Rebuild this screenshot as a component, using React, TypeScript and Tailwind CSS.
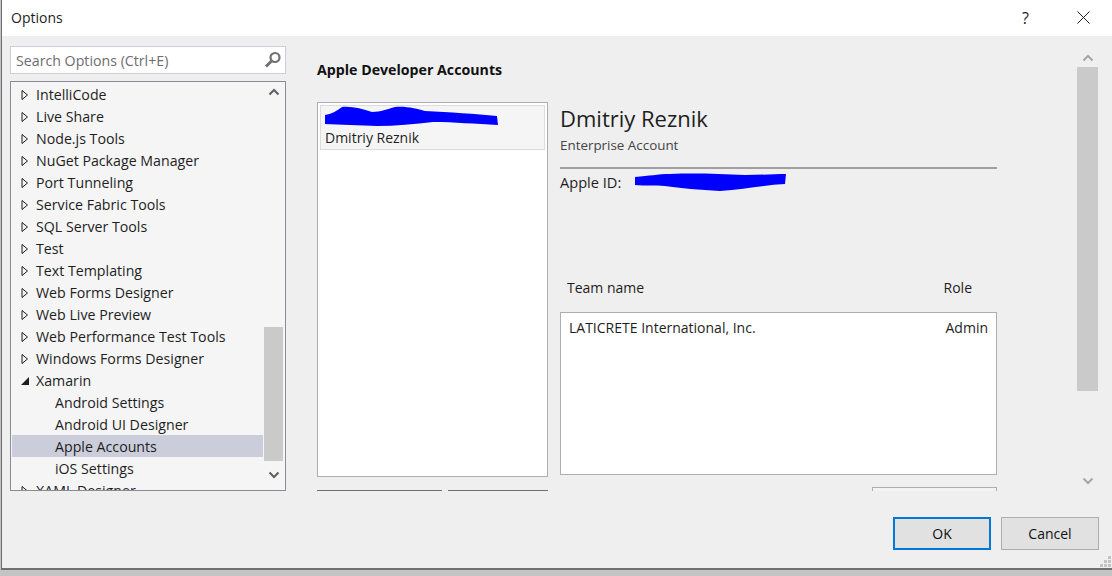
const font = { fontFamily: '"Open Sans", "Noto Sans", sans-serif' };

type TreeRow = { label: string; state?: "closed" | "open"; selected?: boolean };

const rows: TreeRow[] = [
  { label: "IntelliCode", state: "closed" },
  { label: "Live Share", state: "closed" },
  { label: "Node.js Tools", state: "closed" },
  { label: "NuGet Package Manager", state: "closed" },
  { label: "Port Tunneling", state: "closed" },
  { label: "Service Fabric Tools", state: "closed" },
  { label: "SQL Server Tools", state: "closed" },
  { label: "Test", state: "closed" },
  { label: "Text Templating", state: "closed" },
  { label: "Web Forms Designer", state: "closed" },
  { label: "Web Live Preview", state: "closed" },
  { label: "Web Performance Test Tools", state: "closed" },
  { label: "Windows Forms Designer", state: "closed" },
  { label: "Xamarin", state: "open" },
  { label: "Android Settings" },
  { label: "Android UI Designer" },
  { label: "Apple Accounts", selected: true },
  { label: "iOS Settings" },
  { label: "XAML Designer", state: "closed" },
];

function Chevron({ up, color }: { up?: boolean; color: string }) {
  return (
    <svg width="12" height="8" viewBox="0 0 12 8" className="block">
      <path d={up ? "M1.5 6.5 6 2l4.5 4.5" : "M1.5 1.5 6 6l4.5-4.5"} fill="none" stroke={color} strokeWidth="2" />
    </svg>
  );
}

function Row({ row }: { row: TreeRow }) {
  return (
    <div className={`flex h-[22px] shrink-0 items-center pt-[2px] ${row.selected ? "bg-[#cbcdda]" : ""}`}>
      <span className="flex w-[24px] shrink-0 justify-end pr-[7px]">
        {row.state === "closed" && (
          <svg width="8" height="12" viewBox="0 0 8 12" className="block">
            <path d="M1 1.5v9L6.5 6z" fill="none" stroke="#1e1e1e" strokeWidth="1" />
          </svg>
        )}
        {row.state === "open" && (
          <svg width="8" height="8" viewBox="0 0 8 8" className="block">
            <path d="M8 0v8H0z" fill="#1e1e1e" />
          </svg>
        )}
      </span>
      <span className={`whitespace-nowrap text-[14.2px] text-[#1e1e1e] ${row.state ? "" : "pl-[19px]"}`}>{row.label}</span>
    </div>
  );
}

function Scribble({ width, height, d }: { width: number; height: number; d: string }) {
  return (
    <svg width={width} height={height} viewBox={`0 0 ${width} ${height}`} className="block shrink-0">
      <path d={d} fill="#0000ff" />
    </svg>
  );
}

export default function App() {
  return (
    <div className="h-[576px] w-[1112px] overflow-hidden bg-[#c4c4c4]" style={font}>
      <div className="ml-[1px] flex h-[570px] flex-col border-b-2 border-l border-[#6f6f6f] bg-[#efefef]">
        {/* Title bar */}
        <div className="flex h-9 shrink-0 items-center bg-white pb-[1px] pl-[9px] pr-[22px]">
          <span className="text-[14px] text-[#1e1e1e]">Options</span>
          <span className="ml-auto text-[16px] text-[#1e1e1e]">?</span>
          <svg width="13" height="13" viewBox="0 0 13 13" className="ml-[48px] block">
            <path d="M.5.5l12 12M12.5.5l-12 12" stroke="#1e1e1e" strokeWidth="1" fill="none" />
          </svg>
        </div>

        <div className="flex h-[455px] shrink-0 overflow-hidden">
          {/* Options tree */}
          <div className="ml-[8px] flex w-[276px] shrink-0 flex-col pt-[10px]">
            <div className="flex h-[28px] shrink-0 items-center justify-between border border-[#ccccdc] bg-white pl-[5px] pr-[3px]">
              <span className="pt-[2px] text-[14.2px] text-[#6d6d6d]">Search Options (Ctrl+E)</span>
              <svg width="18" height="18" viewBox="0 0 18 18" className="block">
                <circle cx="11" cy="6.5" r="4.5" fill="none" stroke="#717171" strokeWidth="2.2" />
                <path d="M7.5 10 2 15.5" stroke="#717171" strokeWidth="3" />
              </svg>
            </div>
            <div className="mt-[7px] flex h-[410px] shrink-0 overflow-hidden border border-[#8b8b96] bg-[#f5f5f5]">
              <div className="flex w-[252px] shrink-0 flex-col overflow-hidden pl-[1px] pt-[1px]">
                {rows.map((row) => (
                  <Row key={row.label} row={row} />
                ))}
              </div>
              <div className="ml-[1px] flex w-[19px] shrink-0 flex-col items-center">
                <div className="flex h-[20px] shrink-0 items-center">
                  <Chevron up color="#5f5f5f" />
                </div>
                <div className="mt-[225px] h-[134px] w-[19px] shrink-0 bg-[#cacaca]" />
                <div className="flex h-[28px] shrink-0 items-center">
                  <Chevron color="#5f5f5f" />
                </div>
              </div>
            </div>
          </div>

          {/* Apple accounts page */}
          <div className="ml-[31px] flex w-[680px] shrink-0 flex-col">
            <h2 className="mt-[24px] h-[20px] whitespace-nowrap text-[14.2px] font-bold leading-[20px] text-[#111111]">Apple Developer Accounts</h2>
            <div className="mt-[22px] flex">
              <div className="flex w-[231px] shrink-0 flex-col">
                <div className="h-[375px] border border-[#adadb5] bg-white p-[2px]">
                  <div className="flex h-[45px] flex-col border border-[#dcdcdc] bg-[#f5f5f5] pl-[4px]">
                    <Scribble
                      width={174}
                      height={21}
                      d="M0 9C6 8 12 5 17 1 27 0 37 3 47 6 56 6 62 3 70 1 82 0 92 3 100 5 125 6 150 8 172 10L173 19C150 18 130 16 108 16 90 18 70 20 52 20 35 19 15 19 0 18Z"
                    />
                    <span className="mt-[1px] text-[14px] leading-[19px] text-[#1e1e1e]">Dmitriy Reznik</span>
                  </div>
                </div>
                <div className="mt-[13px] flex gap-[6px]">
                  <div className="h-[1px] w-[125px] bg-[#6f6f6f]" />
                  <div className="h-[1px] w-[100px] bg-[#6f6f6f]" />
                </div>
              </div>
              <div className="ml-[12px] flex w-[437px] shrink-0 flex-col">
                <div className="mt-[1px] h-[30px] whitespace-nowrap text-[22px] leading-[30px] text-[#1e1e1e]">Dmitriy Reznik</div>
                <div className="mt-[2px] h-[20px] whitespace-nowrap text-[13.4px] leading-[20px] text-[#444444]">Enterprise Account</div>
                <div className="mt-[12px] h-[2px] bg-[#a0a0a0]" />
                <div className="mt-[3px] flex h-[20px] items-center">
                  <span className="w-[75px] shrink-0 pt-[2px] text-[14.6px] text-[#1e1e1e]">Apple ID:</span>
                  <Scribble
                    width={151}
                    height={18}
                    d="M0 4C15 3 22 1 35 1 60 0 85 1 110 2 125 2 140 1 151 1L150 11C130 12 110 16 85 18 65 17 45 15 30 13 20 12 10 13 0 12Z"
                  />
                </div>
                <div className="mt-[85px] flex h-[20px] items-center justify-between pl-[7px] pr-[25px] text-[14px] text-[#1e1e1e]">
                  <span>Team name</span>
                  <span>Role</span>
                </div>
                <div className="mt-[15px] h-[163px] border border-[#adadb5] bg-white">
                  <div className="flex h-[28px] items-center justify-between pl-[8px] pr-[8px] text-[14px] text-[#1e1e1e]">
                    <span>LATICRETE International, Inc.</span>
                    <span>Admin</span>
                  </div>
                </div>
                <div className="mt-[12px] flex justify-end">
                  <div className="h-[10px] w-[125px] border border-[#adadb5] bg-[#f3f3f3]" />
                </div>
              </div>
            </div>
          </div>

          {/* Page scrollbar */}
          <div className="ml-[80px] flex w-[21px] shrink-0 flex-col items-center">
            <div className="flex h-[31px] shrink-0 items-end pb-[5px]">
              <Chevron up color="#a6a6a6" />
            </div>
            <div className="h-[324px] w-[21px] shrink-0 bg-[#cacaca]" />
            <div className="mt-[86px]">
              <Chevron color="#a6a6a6" />
            </div>
          </div>
        </div>

        {/* Footer */}
        <div className="flex items-start justify-end gap-[10px] pr-[13px] pt-[26px]">
          <button className="h-[33px] w-[98px] border-2 border-[#0078d7] bg-[#e1e1e1] text-[14px] text-[#111111]">OK</button>
          <button className="h-[33px] w-[98px] border border-[#adadad] bg-[#e1e1e1] text-[14px] text-[#111111]">Cancel</button>
        </div>
        <div className="flex flex-1 items-end justify-end">
          <svg width="12" height="12" viewBox="0 0 12 12" className="block">
            <path d="M8 0h3v3H8zM4 4h3v3H4zM8 4h3v3H8zM0 8h3v3H0zM4 8h3v3H4zM8 8h3v3H8z" fill="#c4c4c4" />
          </svg>
        </div>
      </div>
    </div>
  );
}
